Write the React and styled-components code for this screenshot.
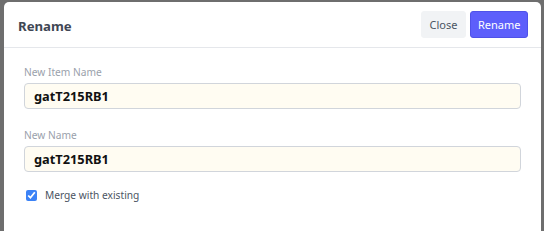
import React, { useState } from "react";
import styled, { createGlobalStyle } from "styled-components";

const GlobalStyle = createGlobalStyle`
  html, body {
    margin: 0;
    padding: 0;
    background: #6e6e6e;
    font-family: "Noto Sans", "Open Sans", sans-serif;
  }
`;

const Overlay = styled.div`
  min-height: 231px;
  padding: 2px 3px 0 4px;
  box-sizing: border-box;
`;

const Modal = styled.div`
  background: #fff;
  border-radius: 5px 5px 0 0;
  height: 240px;
`;

const Header = styled.div`
  height: 45px;
  display: flex;
  align-items: center;
  justify-content: space-between;
  padding: 0 13px 0 14px;
  border-bottom: 1px solid #e5e7eb;
`;

const Title = styled.h3`
  margin: 2px 0 0;
  font-size: 13.2px;
  font-weight: 700;
  color: #3f4754;
`;

const Actions = styled.div`
  display: flex;
  gap: 4px;
`;

const Button = styled.button`
  height: 27px;
  padding: 0 ${(p) => (p.$primary ? "6.5px" : "8px")};
  font-family: inherit;
  font-size: 11px;
  border-radius: 3px;
  cursor: pointer;
  border: 1px solid ${(p) => (p.$primary ? "#4f52e8" : "#f1f3f5")};
  background: ${(p) => (p.$primary ? "#5d5ffb" : "#f1f3f5")};
  color: ${(p) => (p.$primary ? "#fff" : "#4b5563")};
`;

const Body = styled.div`
  padding: 16px 20px 0;
`;

const Field = styled.div`
  display: flex;
  flex-direction: column;
  gap: 2px;
  margin-bottom: 18px;
`;

const Label = styled.label`
  font-size: 10.2px;
  color: #9aa1ab;
  line-height: 17px;
`;

const Input = styled.input`
  height: 26px;
  box-sizing: border-box;
  border: 1px solid #d1d5db;
  border-radius: 4px;
  background: #fffcf2;
  padding: 0 9px;
  font-family: inherit;
  font-size: 12.8px;
  font-weight: 700;
  color: #111;
  outline: none;
`;

const CheckRow = styled.label`
  display: flex;
  align-items: center;
  gap: 8px;
  margin-top: -2px;
  padding-left: 2px;
  font-size: 10.2px;
  color: #4b5563;
`;

const Check = styled.input`
  width: 11px;
  height: 11px;
  margin: 0;
  accent-color: #3b82f6;
`;

export default function App() {
  const [itemName, setItemName] = useState("gatT215RB1");
  const [name, setName] = useState("gatT215RB1");
  const [merge, setMerge] = useState(true);
  return (
    <>
      <GlobalStyle />
      <Overlay>
        <Modal>
          <Header>
            <Title>Rename</Title>
            <Actions>
              <Button>Close</Button>
              <Button $primary>Rename</Button>
            </Actions>
          </Header>
          <Body>
            <Field>
              <Label>New Item Name</Label>
              <Input value={itemName} onChange={(e) => setItemName(e.target.value)} />
            </Field>
            <Field>
              <Label>New Name</Label>
              <Input value={name} onChange={(e) => setName(e.target.value)} />
            </Field>
            <CheckRow>
              <Check type="checkbox" checked={merge} onChange={(e) => setMerge(e.target.checked)} />
              Merge with existing
            </CheckRow>
          </Body>
        </Modal>
      </Overlay>
    </>
  );
}
